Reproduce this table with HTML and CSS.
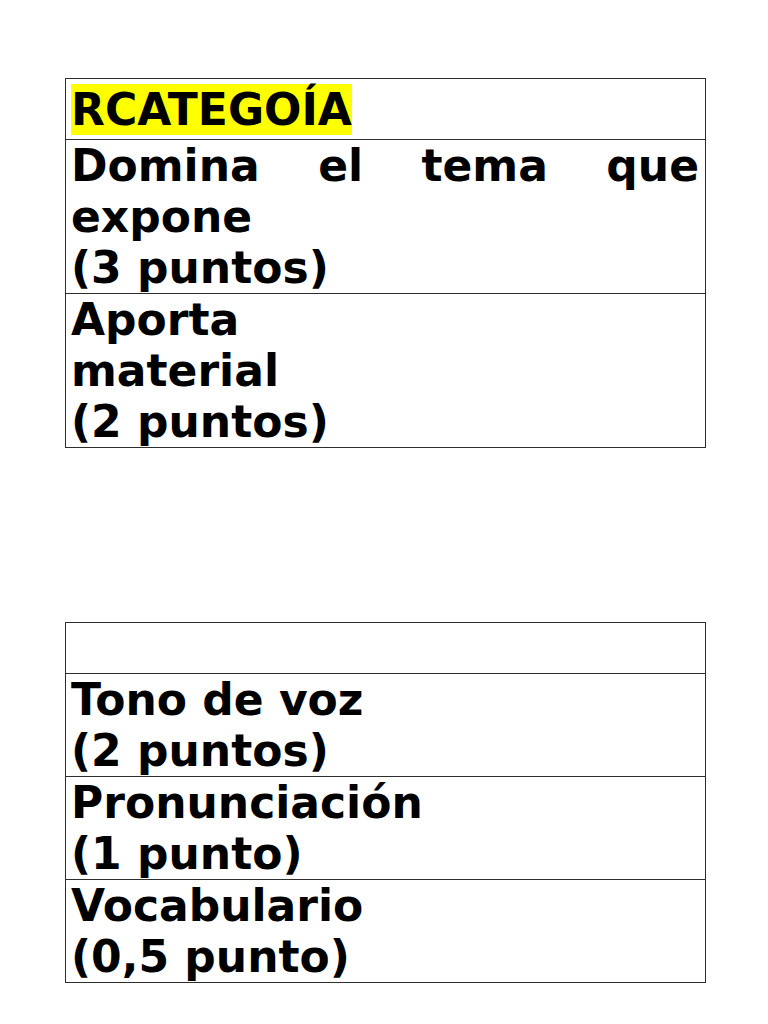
FILE: index.html
```html
<!DOCTYPE html>
<html lang="es">
<head>
<meta charset="utf-8">
<link rel="stylesheet" href="styles.css">
</head>
<body>
<div class="page">
  <table class="grid first">
    <tr><td class="head"><span class="mark">RCATEGOÍA</span></td></tr>
    <tr><td class="just">Domina el tema que expone<br>(3 puntos)</td></tr>
    <tr><td>Aporta<br>material<br>(2 puntos)</td></tr>
  </table>
  <table class="grid second">
    <tr><td class="empty"></td></tr>
    <tr><td>Tono de voz<br>(2 puntos)</td></tr>
    <tr><td>Pronunciación<br>(1 punto)</td></tr>
    <tr><td>Vocabulario<br>(0,5 punto)</td></tr>
  </table>
</div>
</body>
</html>
```

FILE: styles.css
```css
html, body {
  margin: 0;
  padding: 0;
  background: #ffffff;
}
.page {
  padding: 78px 63px 0 65px;
  font-family: "DejaVu Sans", sans-serif;
  font-weight: bold;
  font-size: 44px;
  line-height: 51px;
  color: #000;
}
.grid {
  width: 641px;
  border-collapse: collapse;
}
.grid td {
  border: 1px solid #2e2e2e;
  padding: 0 6px 0 5px;
  vertical-align: top;
}
.first {
  margin-bottom: 174px;
}
.grid td.head {
  padding-top: 5px;
  padding-bottom: 4px;
}
.mark {
  background: #ffff00;
}
.just {
  text-align: justify;
}
.grid td.empty {
  height: 50px;
}
```
